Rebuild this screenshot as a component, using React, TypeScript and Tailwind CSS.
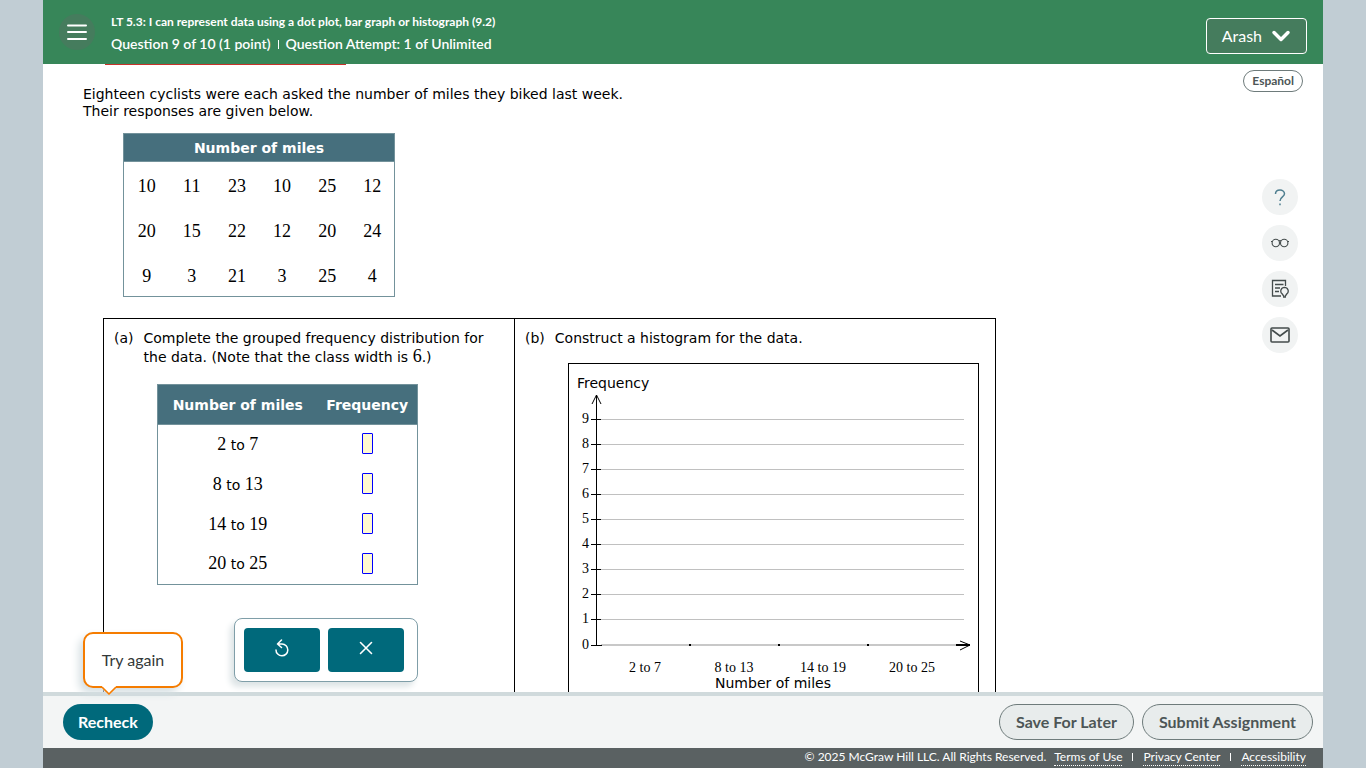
import React from "react";

const miles = [
  [10, 11, 23, 10, 25, 12],
  [20, 15, 22, 12, 20, 24],
  [9, 3, 21, 3, 25, 4],
];

const classes = [
  { from: 2, to: 7 },
  { from: 8, to: 13 },
  { from: 14, to: 19 },
  { from: 20, to: 25 },
];

const Header = () => (
  <header className="flex h-16 shrink-0 items-center gap-4 bg-[#378659] px-4 text-white">
    <button
      aria-label="Menu"
      className="flex size-9 items-center justify-center rounded-full bg-[#457c5d]"
    >
      <svg width="20" height="16" viewBox="0 0 20 16" stroke="white" strokeWidth="2" strokeLinecap="round">
        <path d="M1 1.5h18M1 8h18M1 15h18" />
      </svg>
    </button>
    <div className="flex-1 pt-[2px]">
      <h1 className="text-[12px] leading-[22px] font-bold">
        LT 5.3: I can represent data using a dot plot, bar graph or histograph (9.2)
      </h1>
      <p className="flex items-center text-[14px] leading-[22px] font-semibold">
        Question 9 of 10 (1 point)
        <span className="mx-[7px] h-[9px] w-px bg-white" />
        Question Attempt: 1 of Unlimited
      </p>
    </div>
    <button className="mt-2 flex h-9 items-center gap-[9px] rounded border border-white bg-[#457c5d] px-[15px] pb-px text-[16px]">
      Arash
      <svg width="20" height="12" viewBox="0 0 20 12" fill="none" stroke="white" strokeWidth="3.5" strokeLinecap="round" strokeLinejoin="round">
        <path d="M3 2.5l7 7 7-7" />
      </svg>
    </button>
  </header>
);

const MilesTable = () => (
  <table className="mt-[13px] ml-10 w-[272px] table-fixed border-collapse border border-[#73929b] text-center">
    <thead>
      <tr>
        <th
          colSpan={6}
          className="h-[28px] border border-[#73929b] bg-[#466f7d] p-0 pt-px text-[14px] leading-[17px] font-bold text-white"
        >
          Number of miles
        </th>
      </tr>
    </thead>
    <tbody className="font-['Liberation_Serif',serif] text-[18px]">
      {miles.map((row, i) => (
        <tr key={i} className="h-[45px]">
          {row.map((n, j) => (
            <td key={j} className="p-0 pt-[5px] pl-px">
              {n}
            </td>
          ))}
        </tr>
      ))}
    </tbody>
  </table>
);

const FrequencyTable = () => (
  <table className="mt-[18px] ml-[53px] w-[261px] table-fixed border-collapse border border-[#73929b] text-center">
    <thead>
      <tr className="h-10 border border-[#73929b] bg-[#466f7d] text-[14px] text-white">
        <th className="w-[160px] p-0 pt-px font-bold">Number of miles</th>
        <th className="p-0 pt-px font-bold">Frequency</th>
      </tr>
    </thead>
    <tbody>
      {classes.map((c) => (
        <tr key={c.from} className="h-10">
          <td className="p-0 text-[14px]">
            <span className="font-['Liberation_Serif',serif] text-[18px]">{c.from}</span> to{" "}
            <span className="font-['Liberation_Serif',serif] text-[18px]">{c.to}</span>
          </td>
          <td className="p-0 pb-[2px]">
            <input
              aria-label={`Frequency for ${c.from} to ${c.to}`}
              className="mx-auto block h-[21px] w-[11px] rounded-[1px] border border-[#0000ff] bg-[#fff9d0]"
            />
          </td>
        </tr>
      ))}
    </tbody>
  </table>
);

const Toolbar = () => (
  <div className="mt-[33px] ml-[130px] flex h-16 w-[184px] items-center gap-2 rounded-lg border border-[#7f9ea8] bg-white pl-[9px] shadow-[-4px_5px_6px_#dde4e6]">
    <button aria-label="Start over" className="flex h-11 w-[76px] items-center justify-center rounded bg-[#00697b] pb-1">
      <svg width="16" height="18" viewBox="0 0 16 18" fill="none" stroke="white" strokeWidth="1.5" strokeLinecap="round" strokeLinejoin="round">
        <path d="M7.500 1L3.500 5l4 3.500M3.500 5h4.500a5.900 5.900 0 1 1-6 5.900" />
      </svg>
    </button>
    <button aria-label="Clear" className="flex h-11 w-[76px] items-center justify-center rounded bg-[#00697b] pb-1">
      <svg width="14" height="14" viewBox="0 0 14 14" stroke="white" strokeWidth="1.6" strokeLinecap="round">
        <path d="M1.500 1.500l11 11M12.500 1.500l-11 11" />
      </svg>
    </button>
  </div>
);

const Histogram = () => (
  <svg
    width="411"
    height="345"
    viewBox="0 0 409 343"
    className="mt-4 ml-[53px] border border-black"
    role="img"
    aria-label="Histogram with frequency and number of miles axes"
  >
    <text x="8" y="24" fontSize="14">Frequency</text>
    {[9, 8, 7, 6, 5, 4, 3, 2, 1].map((n, i) => (
      <g key={n}>
        <path d={`M32 ${55.5 + i * 25}h363`} stroke="#c0c0c0" />
        <path d={`M22 ${55.5 + i * 25}h10`} stroke="black" />
        <text x="20" y={59 + i * 25} fontSize="14" textAnchor="end" className="font-['Liberation_Serif',serif]">
          {n}
        </text>
      </g>
    ))}
    <text x="20" y="285" fontSize="14" textAnchor="end" className="font-['Liberation_Serif',serif]">0</text>
    <path d="M32 281h363" stroke="#c8c8c8" strokeWidth="2" />
    <path d="M27.500 31v251M22 281.500h11M23 40l4.500-9 4.500 9" stroke="black" fill="none" />
    <path d="M120 281h2M209 281h2M298 281h2M387 281h14" stroke="black" strokeWidth="2" />
    <path d="M391 277l10 4-10 5" stroke="black" fill="none" />
    {classes.map((c, i) => (
      <text key={c.from} x={76 + i * 89} y="308" fontSize="14" textAnchor="middle" className="font-['Liberation_Serif',serif]">
        {c.from} to {c.to}
      </text>
    ))}
    <text x="204" y="324" fontSize="14" textAnchor="middle">Number of miles</text>
  </svg>
);

const tool = "flex size-9 items-center justify-center rounded-full bg-[#f1f3f3] text-[#444c4c]";

const SideTools = () => (
  <aside className="flex w-20 shrink-0 flex-col items-end pt-[6px] pr-5 font-[Lato,sans-serif]">
    <button className="h-[22px] rounded-full border border-[#6e7b7b] px-2 pb-px text-[12px] leading-[18px] font-bold text-[#4d5656]">
      Español
    </button>
    <div className="mt-[87px] mr-[5px] flex flex-col gap-[10px]">
      <button aria-label="Help" className={tool}>
        <svg width="12" height="17" viewBox="0 0 12 17" fill="none" stroke="#4f7f90" strokeWidth="1.5">
          <path d="M1.500 5C1.500-.2 10.500-.2 10.500 4.800c0 3.200-4.500 3.200-4.500 7.200" />
          <path d="M6 14.500v1.800" />
        </svg>
      </button>
      <button aria-label="Reading view" className={tool}>
        <svg width="18" height="10" viewBox="0 0 18 10" fill="none" stroke="currentColor" strokeWidth="1.1">
          <circle cx="4.800" cy="5" r="3.700" />
          <circle cx="13.200" cy="5" r="3.700" />
          <path d="M0 3.500h1.500M16.500 3.500h1.500M7.800 3.200c.8-.8 1.600-.8 2.400 0" />
        </svg>
      </button>
      <button aria-label="Notes" className={tool}>
        <svg width="18" height="20" viewBox="0 0 18 20" fill="none" stroke="currentColor" strokeWidth="1.300">
          <path d="M10 17H1.500V1.500h13V7M4 5.500h8.500M4 9h5M4 12.500h4" />
          <path d="M13.500 8.300a3.700 3.700 0 0 0-2.400 6.500l1.600 2.200v1.200h1.600V17l1.600-2.200a3.700 3.700 0 0 0-2.400-6.500z" />
        </svg>
      </button>
      <button aria-label="Message" className={tool}>
        <svg width="20" height="16" viewBox="0 0 20 16" fill="none" stroke="currentColor" strokeWidth="1.600">
          <rect x="1" y="1" width="18" height="14" rx="1" />
          <path d="M2 3l8 6 8-6" />
        </svg>
      </button>
    </div>
  </aside>
);

const ActionBar = () => (
  <div className="relative flex h-14 shrink-0 items-center gap-2 border-t-4 border-[#d0dadc] bg-[#f3f5f5] pr-[10px] pl-5 text-[16px]">
    <div
      role="status"
      className="absolute bottom-[60px] left-10 flex h-14 w-[100px] items-center justify-center rounded-[10px] border-2 border-[#f57c00] bg-white text-[#333939] shadow-[-4px_5px_8px_#d5dfe2]"
    >
      Try again
      <svg className="absolute top-[52px] left-[17px]" width="14" height="9" viewBox="0 0 14 9">
        <path d="M0 0h14v2L7 9 0 2z" fill="white" />
        <path d="M0 1l7 7 7-7" fill="none" stroke="#f57c00" strokeWidth="1.600" />
      </svg>
    </div>
    <button className="mr-auto h-9 rounded-full bg-[#00697b] px-[15px] pb-px font-bold text-white">
      Recheck
    </button>
    <button className="h-9 rounded-full border border-[#6e7b7b] bg-[#e8ecec] px-4 pb-px font-bold text-[#4d5656]">
      Save For Later
    </button>
    <button className="h-9 rounded-full border border-[#6e7b7b] bg-[#e8ecec] px-4 pb-px font-bold text-[#4d5656]">
      Submit Assignment
    </button>
  </div>
);

const Footer = () => (
  <footer className="flex h-5 shrink-0 items-start justify-end bg-[#5a6162] pr-[17px] text-[12px] leading-[17px] text-white">
    <span className="mr-2">© 2025 McGraw Hill LLC. All Rights Reserved.</span>
    <a href="#terms" className="border-b border-dotted border-white">Terms of Use</a>
    <span className="mx-[10px] mt-[5px] h-2 w-px bg-white" />
    <a href="#privacy" className="border-b border-dotted border-white">Privacy Center</a>
    <span className="mx-[10px] mt-[5px] h-2 w-px bg-white" />
    <a href="#accessibility" className="border-b border-dotted border-white">Accessibility</a>
  </footer>
);

export default function App() {
  return (
    <div className="h-screen bg-[#c1cdd4] px-[43px] font-[Lato,sans-serif]">
      <div className="mx-auto flex h-full max-w-[1280px] flex-col bg-white">
        <Header />
        <main className="flex min-h-0 flex-1 overflow-hidden font-['DejaVu_Sans',sans-serif] text-[14px] leading-[17px] text-black">
          <div className="min-w-0 flex-1 pl-10">
            <div className="ml-[22px] h-px w-[241px] bg-[#c8322b]" />
            <p className="mt-[21px]">
              Eighteen cyclists were each asked the number of miles they biked last week.
              <br />
              Their responses are given below.
            </p>
            <MilesTable />
            <div className="mt-[21px] ml-5 flex w-[893px] border border-black">
              <section className="w-[411px] border-r border-black">
                <div className="flex gap-[10px] pt-[10px] pl-[10px] leading-[18px]">
                  <span>(a)</span>
                  <p>
                    Complete the grouped frequency distribution for
                    <br />
                    the data. (Note that the class width is{" "}
                    <span className="font-['Liberation_Serif',serif] text-[18px]">6</span>.)
                  </p>
                </div>
                <FrequencyTable />
                <Toolbar />
              </section>
              <section className="flex-1 pb-5">
                <div className="flex gap-[10px] pt-[10px] pl-[10px] leading-[18px]">
                  <span>(b)</span>
                  <p>Construct a histogram for the data.</p>
                </div>
                <Histogram />
              </section>
            </div>
          </div>
          <SideTools />
        </main>
        <ActionBar />
        <Footer />
      </div>
    </div>
  );
}
